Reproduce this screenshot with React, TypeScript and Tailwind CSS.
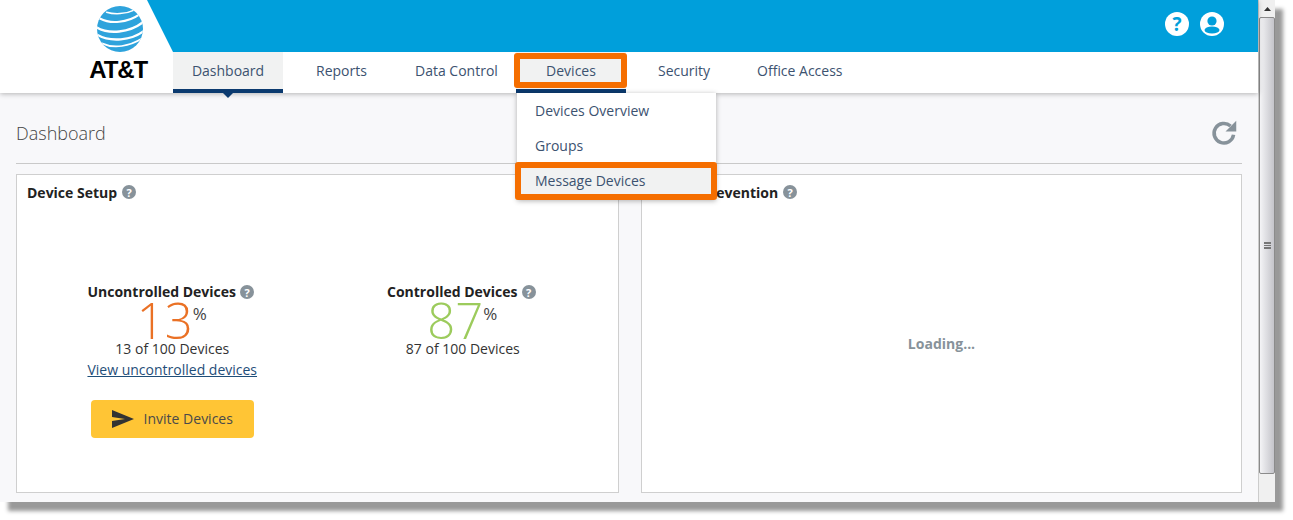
import React from "react";

function Help({ className = "" }: { className?: string }) {
  return (
    <span className={"inline-flex h-[14px] w-[14px] shrink-0 items-center justify-center rounded-full bg-[#87929a] text-[11px] font-bold leading-none text-white " + className}>?</span>
  );
}

function Globe() {
  return (
    <svg width="46" height="46" viewBox="0 0 48 48" className="block">
      <defs>
        <clipPath id="g"><circle cx="24" cy="24" r="24" /></clipPath>
      </defs>
      <circle cx="24" cy="24" r="24" fill="#2ea3dc" />
      <g clipPath="url(#g)" fill="none" stroke="#fff" strokeLinecap="round">
        <path d="M10 6.5C18 9 30 8.5 38 4.5" strokeWidth="1.6" />
        <path d="M3 13C14 19 32 17.5 44 9" strokeWidth="2.2" />
        <path d="M-1 22C12 30 34 28 48 17" strokeWidth="2.6" />
        <path d="M0 30C14 38 36 36 49 26" strokeWidth="2.4" />
        <path d="M5 39C18 45 34 42 47 34" strokeWidth="1.8" />
      </g>
    </svg>
  );
}

function Stat({ title, value, pct, sub, color, children }: { title: string; value: string; pct: string; sub: string; color: string; children?: React.ReactNode }) {
  return (
    <div className="flex flex-col items-center">
      <div className="flex h-[20px] items-center gap-[4px] pr-[3px] text-[14px] font-bold leading-[20px] text-[#222]">
        {title}
        <Help />
      </div>
      <div className="flex h-[37px] items-start pr-[1px]">
        <span className={"text-[49px] font-light leading-[37px] " + color}>{value}</span>
        <span className="mt-[2px] text-[17px] leading-[20px] text-[#444]">{pct}</span>
      </div>
      <div className="text-[14px] leading-[20px] text-[#333]">{sub}</div>
      {children}
    </div>
  );
}

export default function App() {
  return (
    <div className="h-[520px] w-[1293px] overflow-hidden bg-white font-['Open_Sans',sans-serif]">
      <div className="relative flex h-[502px] w-[1275px] bg-white shadow-[8px_9px_4px_#999]">
        <div className="relative flex w-[1258px] flex-col bg-[#f8f8fa]">
          <header className="relative z-10 bg-white shadow-[0_1px_5px_rgba(0,0,0,0.28)]">
            <div className="flex h-[52px]">
              <div className="flex w-[173px] shrink-0">
                <div className="flex w-[147px] justify-end bg-white pr-[4px] pt-[6px]">
                  <Globe />
                </div>
                <svg width="26" height="52" viewBox="0 0 26 52" className="block shrink-0">
                  <rect width="26" height="52" fill="#009fdb" />
                  <path d="M0 0L26 52H0Z" fill="#fff" />
                </svg>
              </div>
              <div className="flex flex-1 items-center justify-end gap-[11px] bg-[#009fdb] pb-[5px] pr-[34px]">
                <svg width="24" height="24" viewBox="0 0 24 24">
                  <circle cx="12" cy="12" r="12" fill="#fff" />
                  <text x="12" y="19" textAnchor="middle" fontSize="19" fontWeight="700" fill="#009fdb" fontFamily="'Open Sans',sans-serif">?</text>
                </svg>
                <svg width="24" height="24" viewBox="0 0 24 24">
                  <circle cx="12" cy="12" r="12" fill="#fff" />
                  <circle cx="12" cy="9" r="4.6" fill="#009fdb" />
                  <ellipse cx="12" cy="18" rx="7.5" ry="3.6" fill="#009fdb" />
                </svg>
              </div>
            </div>
            <nav className="flex h-[41px] text-[14px] text-[#3c5270]">
              <div className="flex w-[173px] shrink-0 items-start justify-end pr-[26px] pt-[3px]">
                <span className="font-['Liberation_Sans',sans-serif] text-[24px] font-bold leading-[30px] tracking-[-1.1px] text-black">AT&amp;T</span>
              </div>
              <div className="relative flex w-[110px] items-center justify-center border-b-[4px] border-[#0b3a6f] bg-[#f1f2f2]">
                Dashboard
                <span className="absolute -bottom-[9px] left-1/2 h-0 w-0 -translate-x-1/2 border-x-[5px] border-t-[5px] border-x-transparent border-t-[#0b3a6f]" />
              </div>
              <div className="flex w-[99px] items-center pb-[5px] pl-[33px]">Reports</div>
              <div className="flex w-[134px] items-center pb-[5px] pl-[33px]">Data Control</div>
              <div className="relative flex w-[110px] items-center justify-center border-b-[4px] border-[#0b3a6f] bg-[#f1f2f2]">
                Devices
                <span className="absolute -left-[2px] -right-[1px] top-[1px] h-[35px] rounded-[3px] border-[6px] border-[#f56e00]" />
              </div>
              <div className="flex w-[131px] items-center pb-[5px] pl-[32px]">Security</div>
              <div className="flex items-center pb-[5px]">Office Access</div>
            </nav>
          </header>

          <main className="flex flex-1 flex-col px-[16px]">
            <div className="flex h-[71px] items-center justify-between border-b border-[#c9c9c9] pr-[4px] pt-[10px]">
              <h1 className="text-[18px] font-light text-[#444]">Dashboard</h1>
              <svg width="28" height="28" viewBox="0 0 24 24" fill="none" className="-mt-[1px]">
                <path d="M20.2 13.5A8.4 8.4 0 1 1 17.6 6" stroke="#87929a" strokeWidth="3" />
                <path d="M22.5 1.6V10.8H13.3Z" fill="#87929a" />
              </svg>
            </div>
            <div className="mt-[10px] flex h-[319px] gap-[22px]">
              <section className="w-[603px] border border-[#cfcfcf] bg-white pt-[7px]">
                <div className="flex h-[20px] items-center gap-[5px] pl-[10px] text-[14px] font-bold text-[#222]">
                  Device Setup <Help />
                </div>
                <div className="mt-[80px] grid grid-cols-2 px-[10px]">
                  <Stat title="Uncontrolled Devices" value="13" pct="%" sub="13 of 100 Devices" color="text-[#ea7125]">
                    <a className="text-[14px] leading-[21px] text-[#1f4e79] underline">View uncontrolled devices</a>
                    <button className="mt-[20px] flex h-[38px] w-[163px] items-center justify-center gap-[10px] rounded-[4px] bg-[#ffc535] pb-[1px] text-[14px] text-[#4a4a4a]">
                      <svg width="22" height="18" viewBox="0 0 22 18"><path d="M0 0L22 9L0 18V11L13 9L0 7Z" fill="#333" /></svg>
                      Invite Devices
                    </button>
                  </Stat>
                  <Stat title="Controlled Devices" value="87" pct="%" sub="87 of 100 Devices" color="text-[#9ccb5c]" />
                </div>
              </section>
              <section className="relative flex w-[601px] flex-col border border-[#cfcfcf] bg-white pt-[7px]">
                <div className="flex h-[20px] items-center justify-start gap-[5px] pl-[9px] text-[14px] font-bold text-[#222]">
                  Threat Prevention <Help />
                </div>
                <div className="flex flex-1 items-center justify-center pb-[8px] text-[14px] font-bold text-[#87929a]">Loading...</div>
              </section>
            </div>
          </main>

          <div className="absolute left-[517px] top-[93px] z-20 flex h-[107px] w-[199px] flex-col bg-white text-[14px] text-[#3c5270] shadow-[0_1px_5px_rgba(0,0,0,0.3)]">
            <div className="flex h-[35px] items-center pl-[18px]">Devices Overview</div>
            <div className="flex h-[35px] items-center pl-[18px]">Groups</div>
            <div className="relative flex h-[37px] items-center bg-[#f1f2f2] pb-[2px] pl-[18px]">
              Message Devices
              <span className="absolute -left-[2px] -right-[1px] -top-[1px] h-[38px] rounded-[3px] border-[6px] border-[#f56e00]" />
            </div>
          </div>
        </div>

        <div className="flex w-[17px] flex-col border-l border-[#ccc] bg-[#f0f0f0]">
          <div className="flex h-[17px] items-center justify-center text-[#333]">
            <svg width="7" height="4" viewBox="0 0 7 4"><path d="M3.5 0L7 4H0Z" fill="#333" /></svg>
          </div>
          <div className="relative flex h-[457px] items-center justify-center rounded-[2px] border border-[#8b8b8b] bg-gradient-to-r from-[#f4f4f6] via-[#dcdce0] to-[#c4c4ca]">
            <div className="h-[7px] w-[7px] border-y border-[#777] bg-[repeating-linear-gradient(#777_0,#777_1px,transparent_1px,transparent_2px)]" />
          </div>
        </div>
      </div>
    </div>
  );
}
